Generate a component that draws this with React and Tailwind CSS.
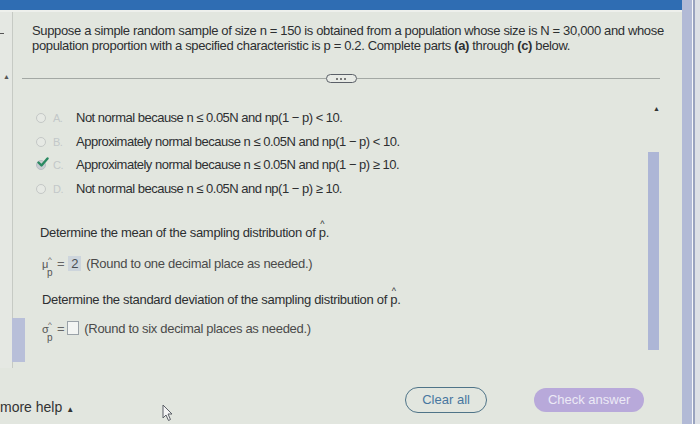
import React from 'react'

const font = { fontFamily: '"Liberation Sans", Arial, sans-serif' }

const Hat = ({ children, className = '', top = '-top-[6px]' }) => (
  <span className={`relative inline-block ${className}`}>
    <span className={`absolute left-0 right-0 ${top} text-center text-[9px] leading-none`}>^</span>
    {children}
  </span>
)

const Radio = ({ checked }) => (
  <span className="relative inline-flex h-[10px] w-[10px] items-center justify-center">
    <span className={`h-[10px] w-[10px] rounded-full border ${checked ? 'border-[#b9bec4] bg-[#c9cdd2]' : 'border-[#c4c8c6] bg-[#e6e9e4]'}`} />
    {checked && (
      <svg className="absolute -top-[3px] left-[1px]" width="12" height="11" viewBox="0 0 12 11">
        <path d="M1.5 5.5 L4.5 8.5 L10.5 1.5" fill="none" stroke="#2b8a62" strokeWidth="2.4" strokeLinecap="round" strokeLinejoin="round" />
      </svg>
    )}
  </span>
)

const options = [
  { key: 'A.', text: 'Not normal because n \u2264 0.05N and np(1 \u2212 p) < 10.' },
  { key: 'B.', text: 'Approximately normal because n \u2264 0.05N and np(1 \u2212 p) < 10.' },
  { key: 'C.', text: 'Approximately normal because n \u2264 0.05N and np(1 \u2212 p) \u2265 10.', checked: true },
  { key: 'D.', text: 'Not normal because n \u2264 0.05N and np(1 \u2212 p) \u2265 10.' },
]

const SubSymbol = ({ symbol }) => (
  <span className="relative inline-block w-[15px] text-[11px] text-[#555]">
    {symbol}
    <span className="absolute left-[6px] top-[-1px] text-[8px] leading-none">^</span>
    <span className="absolute left-[5px] top-[11px] text-[10px] leading-none">p</span>
  </span>
)

export default function App() {
  return (
    <div className="flex h-[424px] w-[700px] overflow-hidden bg-[#e2e6df] text-[#2d2f31]" style={font}>
      <div className="relative flex flex-1 flex-col">
        <div className="h-[10px] bg-[#2f6db3]" />
        <div className="h-[2px] bg-[#eef0ec]" />

        <div className="relative flex flex-1">
          {/* left strip */}
          <div className="relative w-[13px] border-r border-[#c6cac4] bg-[#e5e8e3]">
            <span className="absolute left-0 top-[21px] h-[1px] w-[4px] bg-[#555]" />
            <span className="absolute left-[3px] top-[60px] text-[7px] text-[#555]">▲</span>
          </div>
          <div className="absolute left-[12px] top-[306px] h-[44px] w-[13px] bg-[#b8bfd9]" />

          {/* content */}
          <div className="relative flex-1 pt-[11px]">
            <p className="pl-[19px] pr-[14px] text-[13px] leading-[15px] tracking-[-0.35px]">
              Suppose a simple random sample of size n = 150 is obtained from a population whose size is N = 30,000 and whose population proportion with a specified characteristic is p = 0.2. Complete parts <b>(a)</b> through <b>(c)</b> below.
            </p>

            <div className="mt-[21px] ml-[9px] mr-[22px] flex items-center">
              <div className="h-[1px] flex-1 bg-[#a3a8a4]" />
              <div className="flex h-[9px] w-[31px] items-center justify-center gap-[2px] rounded-full border border-[#5b6068] bg-[#e8ebe6]">
                <span className="h-[2px] w-[2px] rounded-full bg-[#555]" />
                <span className="h-[2px] w-[2px] rounded-full bg-[#555]" />
                <span className="h-[2px] w-[2px] rounded-full bg-[#555]" />
              </div>
              <div className="h-[1px] flex-1 bg-[#a3a8a4]" />
            </div>
            <span className="absolute left-[640px] top-[92px] text-[7px] text-[#333]">▲</span>
            <div className="absolute left-[635px] top-[140px] h-[198px] w-[11px] bg-[#adb6d6]" />

            <div className="mt-[28px] ml-[23px] flex flex-col gap-[9.5px] text-[13px] leading-[14px] tracking-[-0.5px]">
              {options.map((o) => (
                <div key={o.key} className="flex items-center">
                  <Radio checked={o.checked} />
                  <span className="ml-[7px] w-[21px] text-[11px] text-[#c3c8c9]">{o.key}</span>
                  <span className="ml-[2px]">{o.text}</span>
                </div>
              ))}
            </div>

            <div className="mt-[30px] ml-[27px] text-[13px] leading-[14px] tracking-[-0.3px]">
              Determine the mean of the sampling distribution of <Hat>p</Hat>.
            </div>

            <div className="mt-[17px] ml-[29px] flex items-start text-[13px] leading-[14px] tracking-[-0.3px]">
              <SubSymbol symbol={'\u03bc'} />
              <span className="text-[#666]">=</span>
              <span className="ml-[4px] -mt-[1px] bg-[#cdd5dc] px-[3px] leading-[15px] text-[#4a4e52]">2</span>
              <span className="ml-[5px] text-[#4a4a4a]">(Round to one decimal place as needed.)</span>
            </div>

            <div className="mt-[22px] ml-[29px] text-[13px] leading-[14px] tracking-[-0.3px]">
              Determine the standard deviation of the sampling distribution of <Hat>p</Hat>.
            </div>

            <div className="mt-[15px] ml-[29px] flex items-start text-[13px] leading-[14px] tracking-[-0.3px]">
              <SubSymbol symbol={'\u03c3'} />
              <span className="text-[#666]">=</span>
              <span className="ml-[3px] -mt-[1px] h-[14px] w-[12px] border border-[#9aa2a8] bg-[#f3f5f3]" />
              <span className="ml-[5px] text-[#4a4a4a]">(Round to six decimal places as needed.)</span>
            </div>
          </div>
        </div>

        {/* bottom bar */}
        <div className="flex h-[56px] items-center">
          <span className="pt-[22px] text-[14px] text-[#333]">more help <span className="text-[8px]">▲</span></span>
          <svg className="ml-[88px] mt-[34px]" width="12" height="18" viewBox="0 0 12 18">
            <path d="M1 1 L1 14 L4 11 L6.5 16.5 L8.5 15.5 L6 10 L10 10 Z" fill="#f4f4f4" stroke="#5a5f66" strokeWidth="1" strokeLinejoin="round" />
          </svg>
          <button className="ml-[231px] mt-[8px] h-[26px] w-[82px] rounded-full border-[1.5px] border-[#4f7488] text-[13px] text-[#4877a0]">
            Clear all
          </button>
          <button className="ml-[47px] mt-[8px] h-[24px] w-[110px] rounded-full bg-[#b8a9da] text-[13px] text-[#eceaf6]">
            Check answer
          </button>
        </div>
      </div>

      {/* right strip */}
      <div className="flex w-[18px] bg-[#dde0e6]">
        <div className="w-[10px] bg-[#b2bad6]" />
        <div className="w-[1px] bg-[#f7f8fa]" />
        <div className="w-[2px] bg-[#9aa3bf]" />
      </div>
    </div>
  )
}
